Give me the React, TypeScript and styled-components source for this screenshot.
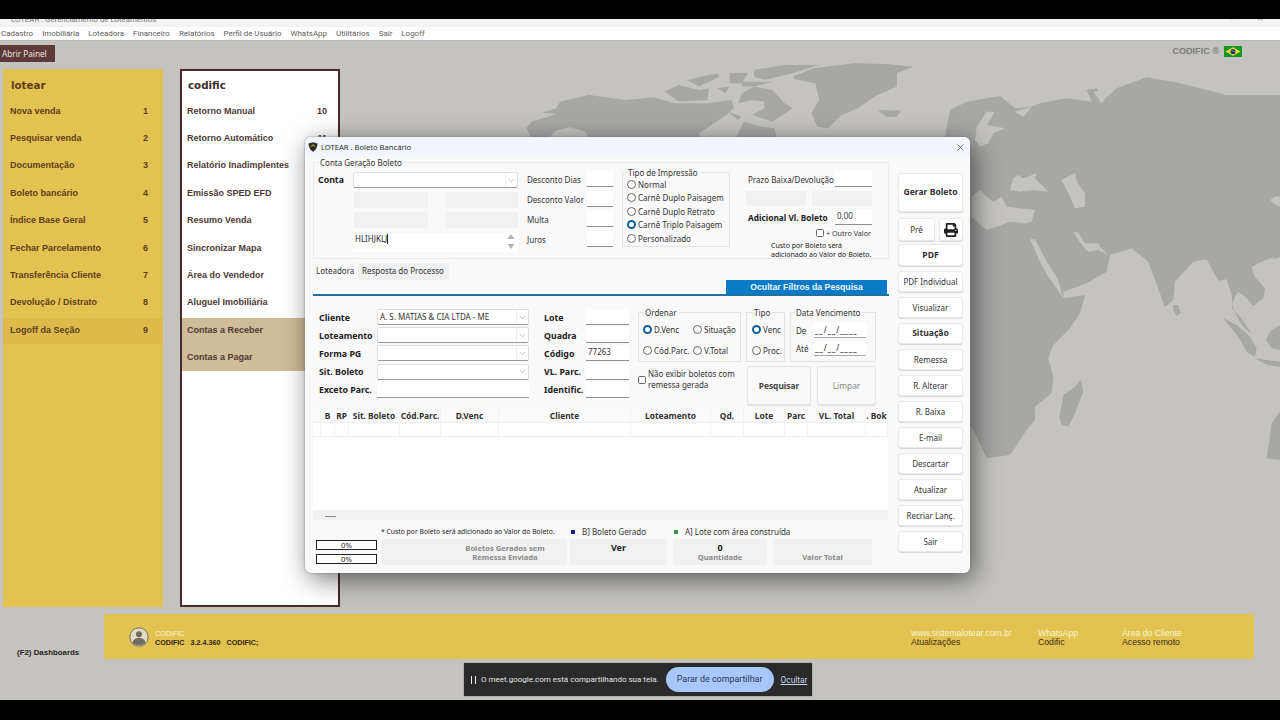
import React from "react";
import styled, { createGlobalStyle } from "styled-components";
import { FaPrint } from "react-icons/fa";
import { ChevronDown, X } from "lucide-react";

const Global = createGlobalStyle`
  html, body { margin: 0; padding: 0; background: #000; }
  body { font-family: "Noto Sans", "Liberation Sans", sans-serif; overflow: hidden; }
  * { box-sizing: border-box; }
`;

const UI = `"Noto Sans", "Liberation Sans", sans-serif`;
const ARIAL = `"Liberation Sans", Arial, sans-serif`;
const SEGOE = `Roboto, "Noto Sans", sans-serif`;

const Page = styled.div`width: 1280px; height: 720px; display: flex; flex-direction: column; background: #000; overflow: hidden;`;
const BlackBar = styled.div<{ $h: number }>`height: ${(p) => p.$h}px; flex: none; background: #000;`;
const WinStrip = styled.div`height: 8px; flex: none; background: #f3f3f3; overflow: hidden; display: flex; justify-content: space-between; padding: 0 11px; color: #777; font: 7.8px/8px ${SEGOE};`;
const WinTitle = styled.span`margin-top: -3px; white-space: nowrap;`;
const WinCtl = styled.span`margin-top: -4px; margin-right: 5px; display: flex; gap: 24px; color: #999;`;
const Menu = styled.nav`height: 14px; flex: none; background: #fff; border-bottom: 1px solid #bbb; display: flex; gap: 9px; align-items: center; color: #5c5c5c; font: 7.95px/13px ${SEGOE}; padding-left: 1px;`;

const Desk = styled.main`position: relative; flex: 1; min-height: 0; background: #c4c3bf; display: flex; flex-direction: column;`;
const MapArt = styled.svg`position: absolute; inset: 0; width: 1280px; height: 659px;`;
const TopRow = styled.div`position: relative; height: 28px; flex: none; padding: 4px 38px 0 0; display: flex; justify-content: space-between; align-items: flex-start;`;
const OpenPanel = styled.button`width: 55px; height: 17px; border: 0; padding: 0 0 0 2px; background: #5c3a38; color: #efe6e0; font: 8.2px/17px ${UI}; text-align: left;`;
const Brand = styled.div`display: flex; align-items: center; gap: 5px; margin-top: 1px; color: #7b7b78; font: bold 9.1px/11px ${ARIAL};`;

const Panels = styled.div`position: relative; display: flex; gap: 17px; padding-left: 3px; height: 538px; flex: none;`;
const Panel = styled.section<{ $light?: boolean }>`
  width: 160px; height: 538px; padding-top: ${(p) => (p.$light ? 6 : 8)}px;
  background: ${(p) => (p.$light ? "#fff" : "#e2c250")};
  border: ${(p) => (p.$light ? "2px solid #4a2a2c" : "0")};
  color: ${(p) => (p.$light ? "#4d3a36" : "#5e3d1c")};
`;
const PanelTitle = styled.h2<{ $light?: boolean }>`margin: 0 0 4px; padding-left: ${(p) => (p.$light ? 6 : 8)}px; height: 16px; font: bold 10.3px/16px "DejaVu Sans", sans-serif; color: ${(p) => (p.$light ? "#3c2f2c" : "#5e3d1c")};`;
const PanelRow = styled.div<{ $tone?: string; $light?: boolean; $joined?: boolean }>`
  height: 27.4px; display: flex; justify-content: space-between; align-items: center;
  padding: 0 ${(p) => (p.$light ? 11 : 15)}px 0 ${(p) => (p.$light ? 5 : 7)}px;
  background: ${(p) => (p.$tone ? (p.$joined ? p.$tone : `linear-gradient(transparent 2px, ${p.$tone} 2px)`) : "transparent")};
  font: bold 9px/14px ${ARIAL}; white-space: nowrap;
`;

const Bottom = styled.div`position: relative; display: flex; align-items: flex-start; padding-top: 7px;`;
const F2 = styled.div`width: 104px; padding: 33px 0 0 17px; font: bold 7.9px/11px ${ARIAL}; color: #222; white-space: nowrap;`;
const InfoBar = styled.footer`width: 1150px; height: 45px; background: #e2c250; display: flex; align-items: center; padding-left: 25px;`;
const Who = styled.div`display: flex; align-items: center; gap: 6px; flex: 1;`;
const InfoCol = styled.div<{ $w: number; $fs?: number }>`width: ${(p) => p.$w}px; margin-top: 3px; font: ${(p) => p.$fs || 8.7}px/9.5px ${ARIAL}; color: #3d2c10;`;
const InfoHead = styled.div`color: #fbf3d0; white-space: nowrap;`;
const InfoSub = styled.div`white-space: nowrap;`;
const WhoSub = styled(InfoSub)`font-weight: bold; word-spacing: 4px; color: #32250c;`;

const MeetBar = styled.div`position: absolute; left: 464px; top: 622px; width: 348px; height: 33px; background: #2a2a2a; color: #e4e4e4; display: flex; align-items: center; padding-left: 7px; font: 8px/12px ${SEGOE}; white-space: nowrap; box-shadow: 0 0 1px #555;`;
const Pause = styled.span`width: 5px; height: 8px; flex: none; margin-right: 5px; border-left: 1.5px solid #eee; border-right: 1.5px solid #eee;`;
const MeetStop = styled.button`margin-left: 7px; width: 108px; height: 25px; flex: none; border: 0; padding: 0; border-radius: 13px; background: #a8c7fa; color: #1e3a63; font: 400 8.9px/25px ${SEGOE};`;
const MeetHide = styled.a`margin-left: 7px; color: #c9d6e8; text-decoration: underline; font-size: 8.3px;`;

const Dialog = styled.div`position: absolute; left: 305px; top: 96px; width: 665px; height: 436px; background: #f9f9f9; border-radius: 6px; box-shadow: 0 0 2px #777, 4px 6px 26px rgba(0,0,0,.55); color: #333; font: 8px/11px ${UI}; overflow: hidden;`;
const TitleBar = styled.header`height: 20px; display: flex; align-items: center; gap: 3px; padding: 0 4px 0 3px; background: #f2f5fb; font-size: 7.6px; color: #2c2c2c; justify-content: flex-start;`;
const TitleText = styled.span`flex: 1;`;
const Body = styled.div`display: flex; gap: 9px; padding: 5px 0 0 8px;`;
const Content = styled.div`width: 576px; display: flex; flex-direction: column;`;
const Side = styled.aside`width: 65px; margin-top: 11px; display: flex; flex-direction: column; gap: 5px;`;
const SideBtn = styled.button<{ $h?: number; $bold?: boolean; $grow?: boolean; $narrow?: boolean }>`
  height: ${(p) => p.$h || 21}px; ${(p) => p.$grow && "flex: 1;"} ${(p) => p.$narrow && "width: 24px; flex: none;"} min-width: 0; padding: 0; background: #fff; border: 1px solid #e9e9e9; border-radius: 3px;
  box-shadow: 0 1px 1px rgba(0,0,0,.14); color: #333; white-space: nowrap;
  font: ${(p) => (p.$bold ? "bold 8.6px" : "normal 8px")}/11px ${UI};
  display: flex; align-items: center; justify-content: center;
`;
const SideSplit = styled.div`display: flex; gap: 4px; margin-top: 1px; margin-bottom: -2px;`;

const TopGroup = styled.div`position: relative; height: 97px; padding: 9px 0 0 4px; border: 1px solid #ececec; display: flex;`;
const Legend = styled.span<{ $x: number }>`position: absolute; left: ${(p) => p.$x}px; top: -6px; padding: 0 2px 0 1px; background: #f9f9f9; white-space: nowrap; color: #333;`;
const AccCol = styled.div`width: 200px; display: flex; flex-direction: column;`;
const AccRow = styled.div`display: flex; align-items: center; height: 16px;`;
const StrongLabel = styled.label<{ $w?: number; $fs?: number }>`font-weight: 700; font-size: ${(p) => p.$fs || 8.8}px; color: #222; white-space: nowrap; ${(p) => p.$w && `width: ${p.$w}px; flex: none;`}`;
const Pair = styled.div`display: flex; gap: 17px; padding-left: 36px; margin-top: 4px;`;
const Ghost = styled.div<{ $w: number; $h?: number }>`width: ${(p) => p.$w}px; height: ${(p) => p.$h || 16}px; background: #f1f1f1;`;
const Memo = styled.div`margin: 5px 0 0 35px; height: 19px; background: #fff; padding: 0 3px 0 2px; display: flex; justify-content: space-between; align-items: flex-start; color: #222;`;
const Caret = styled.span`display: inline-block; width: 1px; height: 10px; background: #222; vertical-align: -2px;`;
const Select = styled.div`
  flex: 1; height: 16px; background: #fff; border: 1px solid #ddd; border-bottom-color: #999; border-radius: 2px; padding: 0 14px 0 2px; position: relative; line-height: 14px; color: #333; white-space: nowrap;
`;
const SelectArrow = styled.span<{ $noSep?: boolean }>`position: absolute; right: 0; top: 0; bottom: 0; width: 12px; display: flex; align-items: center; justify-content: center; color: #888; ${(p) => !p.$noSep && "border-left: 1px solid #eee;"}`;
const PlainCol = styled.div`width: 86px; margin: -1px 0 0 9px; display: flex; flex-direction: column; gap: 4px;`;
const LabelRow = styled.div`height: 16px; display: flex; justify-content: space-between; align-items: center; white-space: nowrap;`;
const IndentRow = styled(LabelRow)`padding-left: 2px;`;
const Under = styled.div<{ $w: number; $h?: number }>`width: ${(p) => p.$w}px; height: ${(p) => p.$h || 16}px; flex: none; background: #fff; border-bottom: 1px solid #8e8e8e; padding: 0 2px; line-height: 14px; color: #333;`;
const Box = styled.div<{ $w: number; $h: number; $ml?: number }>`position: relative; width: ${(p) => p.$w}px; height: ${(p) => p.$h}px; flex: none; margin-left: ${(p) => p.$ml || 0}px; border: 1px solid #e3e3e3;`;
const RadioStack = styled.div`display: flex; flex-direction: column; gap: 2.4px; padding: 6px 0 0 4px;`;
const RadioItem = styled.label`display: flex; align-items: center; gap: 2px; height: 11px; white-space: nowrap; color: #333;`;
const RadioDot = styled.span<{ $on?: boolean }>`width: 9px; height: 9px; flex: none; border-radius: 50%; background: #fff; border: ${(p) => (p.$on ? "2.6px solid #0f5f9e" : "1px solid #666")};`;
const RightCol = styled.div`width: 126px; margin: -1px 0 0 16px; display: flex; flex-direction: column;`;
const GhostRow = styled.div`display: flex; gap: 6px; margin: 4px 0 3px;`;
const OtherRow = styled.label`display: flex; align-items: center; justify-content: flex-end; gap: 2px; margin-top: 3px; font-size: 7.2px; height: 10px; padding-right: 1px;`;
const Check = styled.span`width: 8px; height: 8px; flex: none; background: #fff; border: 1px solid #666; border-radius: 1.5px;`;
const Note = styled.div`margin: 3px 0 0 25px; font-size: 7px; line-height: 9px; color: #222; white-space: nowrap;`;

const Tabs = styled.div`display: flex; height: 17px; margin-top: 4px;`;
const Tab = styled.div<{ $on?: boolean }>`width: ${(p) => (p.$on ? 45 : 91)}px; line-height: 16px; padding-left: ${(p) => (p.$on ? 3 : 4)}px; background: ${(p) => (p.$on ? "#f9f9f9" : "#f0f0f0")}; color: #333; white-space: nowrap;`;
const FilterHead = styled.div`height: 16px; border-bottom: 2px solid #1d719f; display: flex; justify-content: flex-end; padding-right: 2px;`;
const Hide = styled.div`width: 161px; height: 14px; background: #0b7ac7; color: #eef6fb; text-align: center; font: bold 8.7px/15px ${ARIAL};`;

const Filters = styled.div`display: flex; margin-top: 13px; height: 99px;`;
const FormCol = styled.div`width: 216px; padding-left: 6px; display: flex; flex-direction: column; gap: 2.2px;`;
const FormRow = styled.div`height: 16px; display: flex; align-items: center; white-space: nowrap; label { padding-top: 2px; }`;
const LotCol = styled.div`width: 85px; margin-left: 15px; display: flex; flex-direction: column; gap: 2.2px;`;
const Wide = styled.div`flex: 1; height: 16px; background: #fff; border-bottom: 1px solid #999;`;
const FilterRight = styled.div`margin: 3px 0 0 9px; display: flex; flex-direction: column; gap: 4px;`;
const FieldRow = styled.div`display: flex; gap: 5px;`;
const RadioGrid = styled.div`display: grid; grid-template-columns: 50px 48px; row-gap: 10px; padding: 11px 0 0 4px;`;
const RadioCol = styled.div`display: flex; flex-direction: column; gap: 10px; padding: 11px 0 0 5px;`;
const DateRows = styled.div`display: flex; flex-direction: column; gap: 3px; padding: 10px 0 0 5px;`;
const DateRow = styled.div`height: 15px; display: flex; align-items: center; gap: 7px;`;
const DateLabel = styled.span`width: 11px;`;
const DateValue = styled.div`width: 52px; height: 15px; background: #fff; border-bottom: 1px solid #aaa; padding-left: 1px; line-height: 14px; letter-spacing: .8px; color: #222;`;
const ActionRow = styled.div`display: flex; align-items: flex-start;`;
const HideCheck = styled.label`width: 109px; display: flex; align-items: center; gap: 2px; margin-top: 3px; line-height: 10.5px; color: #333; font-size: 8px;`;
const BigBtn = styled.button<{ $w: number; $dim?: boolean; $ml?: number }>`width: ${(p) => p.$w}px; margin-left: ${(p) => p.$ml || 0}px; height: 39px; padding: 0; background: #f9f9f9; border: 1px solid #e5e5e5; border-radius: 3px; box-shadow: 0 1px 1px rgba(0,0,0,.1); font: ${(p) => (p.$dim ? "normal" : "bold")} 8.4px/11px ${UI}; color: ${(p) => (p.$dim ? "#888" : "#444")};`;

const COLS = "8px 14px 14px 51px 41px 58px 132px 80px 33px 41px 23px 58px 22px";
const Grid = styled.div`width: 575px; display: flex; flex-direction: column; background: #fff;`;
const GridHead = styled.div`display: grid; grid-template-columns: ${COLS}; height: 14px; background: #fafafa; overflow: hidden;`;
const HeadCell = styled.div`font: 700 8.4px/16px ${UI}; color: #333; text-align: center; white-space: nowrap; border-right: 1px solid #f1f1f1;`;
const GridRow = styled.div`display: grid; grid-template-columns: ${COLS}; height: 15px; border-top: 1px solid #eee; border-bottom: 1px solid #eee;`;
const RowCell = styled.div`border-right: 1px solid #f3f3f3;`;
const GridEmpty = styled.div`height: 73px;`;
const GridScroll = styled.div`height: 10px; background: #f1f1f1; padding: 6px 0 0 12px;`;
const Dash = styled.div`width: 11px; height: 1px; background: #888;`;

const Footer = styled.div`display: flex; flex-direction: column; padding-top: 5px;`;
const LegendRow = styled.div`height: 13px; display: flex; align-items: center; padding-left: 68px; white-space: nowrap;`;
const Fine = styled.span`font-size: 6.8px; width: 190px; color: #222;`;
const Key = styled.span<{ $c: string; $w: number }>`display: flex; align-items: center; gap: 7px; width: ${(p) => p.$w}px; font-size: 8px; &::before { content: ""; width: 4px; height: 4px; background: ${(p) => p.$c}; }`;
const Tiles = styled.div`display: flex; margin-top: 1px; padding-left: 3px;`;
const Bars = styled.div`width: 61px; display: flex; flex-direction: column; gap: 4px; margin-top: 1px;`;
const Progress = styled.div`height: 10px; background: #fff; border: 1px solid #222; text-align: center; font-size: 7.8px; line-height: 8px; color: #222;`;
const Tile = styled.div<{ $w: number; $ml: number; $pad?: number }>`width: ${(p) => p.$w}px; margin-left: ${(p) => p.$ml}px; height: 26px; padding-left: ${(p) => p.$pad || 0}px; background: #f1f1f1; display: flex; flex-direction: column; align-items: center; justify-content: center; color: #8a8a8a; font: bold 7.6px/9.5px ${UI}; text-align: center; white-space: nowrap;`;
const TileText = styled.div`padding-top: 2px;`;
const TileStrong = styled.div`font: bold 9px/11px ${UI}; color: #222;`;

const menu = ["Cadastro", "Imobiliária", "Loteadora", "Financeiro", "Relatórios", "Perfil de Usuário", "WhatsApp", "Utilitários", "Sair", "Logoff"];
const left = ["Nova venda", "Pesquisar venda", "Documentação", "Boleto bancário", "Índice Base Geral", "Fechar Parcelamento", "Transferência Cliente", "Devolução / Distrato", "Logoff da Seção"];
const right = ["Retorno Manual", "Retorno Automático", "Relatório Inadimplentes", "Emissão SPED EFD", "Resumo Venda", "Sincronizar Mapa", "Área do Vendedor", "Aluguel Imobiliária", "Contas a Receber", "Contas a Pagar"];
const printTypes = [["Normal"], ["Carnê Duplo Paisagem"], ["Carnê Duplo Retrato"], ["Carnê Triplo Paisagem", true], ["Personalizado"]] as const;
const heads = ["", "B", "RP", "Sit. Boleto", "Cód.Parc.", "D.Venc", "Cliente", "Loteamento", "Qd.", "Lote", "Parc", "VL. Total", ". Bok"];
const sideButtons = ["Visualizar", "Situação", "Remessa", "R. Alterar", "R. Baixa", "E-mail", "Descartar", "Atualizar", "Recriar Lanç.", "Sair"];

const poly = (pts: string, fill: string) => <polygon points={pts} fill={fill} />;
const LAND = "#a7a7a6";
const SEA = "#c4c3bf";

function WorldMap() {
  return (
    <MapArt viewBox="0 41 1280 659" aria-hidden="true">
      <g transform="translate(340 40) scale(.408 .333)">
        {poly("457,265 470,245 530,222 495,218 530,205 540,185 610,165 700,180 770,172 820,190 900,190 960,180 965,205 950,222 880,280 880,295 610,295 600,275 565,262 530,272 510,295 470,295", LAND)}
        {poly("970,295 990,245 1030,260 1065,265 1070,295", LAND)}
        {poly("975,190 985,160 1015,140 1060,150 1090,190 1110,205 1060,245 1010,225 1040,205 1040,185 1010,180", LAND)}
        {poly("795,155 830,135 880,150 905,145 900,180 830,185", LAND)}
        {poly("850,120 885,110 925,100 930,110 905,125 880,140", LAND)}
        {poly("925,145 955,140 945,160", LAND)}
        {poly("1015,90 1090,75 1175,75 1110,100 1040,120 1015,110", LAND)}
        {poly("955,100 1000,98 985,130 955,130", LAND)}
        {poly("985,125 1060,125 1015,140 985,140", LAND)}
        {poly("950,215 985,230 975,240", LAND)}
        {poly("1110,110 1160,85 1260,70 1340,72 1405,80 1365,100 1365,140 1310,170 1270,205 1230,225 1195,265 1170,260 1155,220 1175,180 1165,130 1115,118", LAND)}
        {poly("1318,210 1375,212 1365,230 1340,232", LAND)}
      </g>
      <g transform="translate(960 0) scale(.3333)">
        {poly("-45,1200 -45,410 -30,330 20,305 120,288 165,325 215,320 240,310 320,295 395,305 380,270 410,265 430,300 470,265 560,232 640,245 720,265 800,285 960,285 960,772 905,785 875,805 885,830 915,865 910,895 880,918 860,895 835,875 825,890 815,925 835,945 855,970 875,1002 845,975 820,930 815,885 800,838 775,842 740,778 700,785 645,845 640,900 615,922 565,785 515,745 450,765 440,815 380,850 310,875 310,895 375,885 360,940 330,985 280,1035 265,1075 280,1130 275,1180 225,1220 225,1260 200,1290 150,1365 80,1375 40,1290", LAND)}
        {poly("210,718 225,718 255,775 295,840 305,880 310,895 300,880 265,830 240,785", SEA)}
        {poly("340,695 355,698 375,730 415,730 420,740 445,765 415,750 385,755 365,735", SEA)}
        {poly("35,590 60,570 80,590 100,605 125,590 140,620 180,625 225,630 215,665 195,670 150,665 110,680 80,690 55,670 35,650", SEA)}
        {poly("150,570 160,535 175,525 190,535 230,520 225,535 265,575 220,570 180,575", SEA)}
        {poly("305,540 345,518 350,545 375,580 375,620 345,625 330,590", SEA)}
        {poly("50,380 80,335 105,335 80,375 135,385 100,400 85,430 60,440 45,420", SEA)}
        {poly("165,335 215,320 190,350", SEA)}
        {poly("400,275 425,310 435,300 415,272", SEA)}
        {poly("930,600 945,590 960,590 960,620 945,612", SEA)}
        {poly("875,800 905,785 945,770 915,800 905,815 890,825", SEA)}
        {poly("362,1140 370,1175 345,1240 325,1280 305,1275 298,1250 310,1185 345,1160", LAND)}
        {poly("640,915 655,915 662,940 650,948 640,930", LAND)}
        {poly("790,955 830,975 870,1010 890,1045 885,1070 860,1055 835,1010", LAND)}
        {poly("885,1075 920,1080 960,1085 960,1100 920,1095", LAND)}
        {poly("960,975 930,995 918,1020 935,1045 960,1050", LAND)}
        {poly("960,1235 935,1270 930,1310 920,1375 960,1380", LAND)}
      </g>
    </MapArt>
  );
}

const Shield = () => (
  <svg width="10" height="10" viewBox="0 0 10 10" aria-hidden="true">
    <path d="M0.5 1.5 L5 0.3 L9.5 1.5 C9.5 5 8 8 5 9.7 C2 8 .5 5 .5 1.5Z" fill="#2c2c20" />
    <path d="M2 5 L5 2.2 L8 5 L5 3.8Z" fill="#d8c23e" />
  </svg>
);

const Flag = () => (
  <svg width="18" height="11" viewBox="0 0 18 11" aria-hidden="true">
    <rect width="18" height="11" fill="#17951f" />
    <path d="M9 1.2 L16.4 5.5 L9 9.8 L1.6 5.5Z" fill="#f4e23a" />
    <circle cx="9" cy="5.5" r="2.6" fill="#1a2a70" />
    <path d="M6.6 5 C8 4.6 10 5 11.5 6" stroke="#eee" strokeWidth=".5" fill="none" />
  </svg>
);

const Person = () => (
  <svg width="20" height="20" viewBox="0 0 20 20" aria-hidden="true">
    <circle cx="10" cy="10" r="9.2" fill="#e4dcc0" stroke="#6f6c63" strokeWidth="1" />
    <circle cx="10" cy="7.3" r="3" fill="#6f6c63" />
    <path d="M3.5 16 C4 12 7 11 10 11 C13 11 16 12 16.5 16 C14.5 18.8 5.5 18.8 3.5 16Z" fill="#6f6c63" />
  </svg>
);

const SpinArrows = () => (
  <svg width="8" height="17" viewBox="0 0 8 17" aria-hidden="true">
    <path d="M4 1 L7.5 6 H.5Z M4 16 L.5 11 H7.5Z" fill="#b5b5b5" />
  </svg>
);

const Arrow = ({ noSep }: { noSep?: boolean }) => (
  <SelectArrow $noSep={noSep}><ChevronDown size={9} strokeWidth={1.4} /></SelectArrow>
);

export default function App() {
  return (
    <Page>
      <Global />
      <BlackBar $h={19} />
      <WinStrip>
        <WinTitle>LOTEAR . Gerenciamento de Loteamentos</WinTitle>
        <WinCtl><span>▫</span><span>✕</span></WinCtl>
      </WinStrip>
      <Menu>{menu.map((m) => <span key={m}>{m}</span>)}</Menu>
      <Desk>
        <WorldMap />
        <TopRow>
          <OpenPanel>Abrir Painel</OpenPanel>
          <Brand>CODIFIC ® <Flag /></Brand>
        </TopRow>
        <Panels>
          <Panel>
            <PanelTitle>lotear</PanelTitle>
            {left.map((t, i) => (
              <PanelRow key={t} $tone={i === 8 ? "#dcbb4c" : undefined}><span>{t}</span><span>{i + 1}</span></PanelRow>
            ))}
          </Panel>
          <Panel $light>
            <PanelTitle $light>codific</PanelTitle>
            {right.map((t, i) => (
              <PanelRow key={t} $light $joined={i === 9} $tone={i >= 8 ? "#cfbc98" : undefined}><span>{t}</span><span>{i < 2 ? 10 + i : ""}</span></PanelRow>
            ))}
          </Panel>
        </Panels>
        <Bottom>
          <F2>(F2) Dashboards</F2>
          <InfoBar>
            <Who>
              <Person />
              <InfoCol $w={200} $fs={7.2}>
                <InfoHead>CODIFIC</InfoHead>
                <WhoSub>CODIFIC 3.2.4.360 CODIFIC;</WhoSub>
              </InfoCol>
            </Who>
            <InfoCol $w={127}><InfoHead>www.sistemalotear.com.br</InfoHead><InfoSub>Atualizações</InfoSub></InfoCol>
            <InfoCol $w={84}><InfoHead>WhatsApp</InfoHead><InfoSub>Codific</InfoSub></InfoCol>
            <InfoCol $w={132}><InfoHead>Área do Cliente</InfoHead><InfoSub>Acesso remoto</InfoSub></InfoCol>
          </InfoBar>
        </Bottom>
        <MeetBar>
          <Pause />
          O meet.google.com está compartilhando sua tela.
          <MeetStop>Parar de compartilhar</MeetStop>
          <MeetHide>Ocultar</MeetHide>
        </MeetBar>

        <Dialog>
          <TitleBar>
            <Shield />
            <TitleText>LOTEAR . Boleto Bancário</TitleText>
            <X size={11} strokeWidth={1.4} />
          </TitleBar>
          <Body>
            <Content>
              <TopGroup>
                <Legend $x={5}>Conta Geração Boleto</Legend>
                <AccCol>
                  <AccRow>
                    <StrongLabel $w={35}>Conta</StrongLabel>
                    <Select><Arrow /></Select>
                  </AccRow>
                  <Pair><Ghost $w={74} /><Ghost $w={73} /></Pair>
                  <Pair><Ghost $w={74} /><Ghost $w={73} /></Pair>
                  <Memo>
                    <span>HLIHJKLJ<Caret /></span>
                    <SpinArrows />
                  </Memo>
                </AccCol>
                <PlainCol>
                  {["Desconto Dias", "Desconto Valor", "Multa", "Juros"].map((l) => (
                    <LabelRow key={l}><span>{l}</span><Under $w={26} /></LabelRow>
                  ))}
                </PlainCol>
                <Box $w={108} $h={75} $ml={9}>
                  <Legend $x={4}>Tipo de Impressão</Legend>
                  <RadioStack>
                    {printTypes.map(([l, on]) => (
                      <RadioItem key={l}><RadioDot $on={!!on} />{l}</RadioItem>
                    ))}
                  </RadioStack>
                </Box>
                <RightCol>
                  <IndentRow><span>Prazo Baixa/Devolução</span><Under $w={37} /></IndentRow>
                  <GhostRow><Ghost $w={60} $h={15} /><Ghost $w={60} $h={15} /></GhostRow>
                  <IndentRow><StrongLabel $fs={8.3}>Adicional Vl. Boleto</StrongLabel><Under $w={37}>0,00</Under></IndentRow>
                  <OtherRow><Check />+ Outro Valor</OtherRow>
                  <Note>Custo por Boleto será<br />adicionado ao Valor do Boleto.</Note>
                </RightCol>
              </TopGroup>
              <Tabs>
                <Tab $on>Loteadora</Tab>
                <Tab>Resposta do Processo</Tab>
              </Tabs>
              <FilterHead><Hide>Ocultar Filtros da Pesquisa</Hide></FilterHead>
              <Filters>
                <FormCol>
                  <FormRow><StrongLabel $w={58}>Cliente</StrongLabel><Select>A. S. MATIAS &amp; CIA LTDA - ME<Arrow /></Select></FormRow>
                  <FormRow><StrongLabel $w={58}>Loteamento</StrongLabel><Select><Arrow /></Select></FormRow>
                  <FormRow><StrongLabel $w={58}>Forma PG</StrongLabel><Select><Arrow /></Select></FormRow>
                  <FormRow><StrongLabel $w={58}>Sit. Boleto</StrongLabel><Select><Arrow noSep /></Select></FormRow>
                  <FormRow><StrongLabel $w={58}>Exceto Parc.</StrongLabel><Wide /></FormRow>
                </FormCol>
                <LotCol>
                  {[["Lote", ""], ["Quadra", ""], ["Código", "77263"], ["VL. Parc.", ""], ["Identific.", ""]].map(([l, v]) => (
                    <FormRow key={l}><StrongLabel $w={42}>{l}</StrongLabel><Under $w={43}>{v}</Under></FormRow>
                  ))}
                </LotCol>
                <FilterRight>
                  <FieldRow>
                    <Box $w={103} $h={50}>
                      <Legend $x={5}>Ordenar</Legend>
                      <RadioGrid>
                        <RadioItem><RadioDot $on />D.Venc</RadioItem>
                        <RadioItem><RadioDot />Situação</RadioItem>
                        <RadioItem><RadioDot />Cód.Parc.</RadioItem>
                        <RadioItem><RadioDot />V.Total</RadioItem>
                      </RadioGrid>
                    </Box>
                    <Box $w={39} $h={50}>
                      <Legend $x={6}>Tipo</Legend>
                      <RadioCol>
                        <RadioItem><RadioDot $on />Venc</RadioItem>
                        <RadioItem><RadioDot />Proc.</RadioItem>
                      </RadioCol>
                    </Box>
                    <Box $w={86} $h={50}>
                      <Legend $x={4}>Data Vencimento</Legend>
                      <DateRows>
                        <DateRow><DateLabel>De</DateLabel><DateValue>__/__/____</DateValue></DateRow>
                        <DateRow><DateLabel>Até</DateLabel><DateValue>__/__/____</DateValue></DateRow>
                      </DateRows>
                    </Box>
                  </FieldRow>
                  <ActionRow>
                    <HideCheck><Check /><span>Não exibir boletos com<br />remessa gerada</span></HideCheck>
                    <BigBtn $w={64}>Pesquisar</BigBtn>
                    <BigBtn $w={59} $ml={6} $dim>Limpar</BigBtn>
                  </ActionRow>
                </FilterRight>
              </Filters>
              <Grid>
                <GridHead>{heads.map((h, i) => <HeadCell key={i}>{h}</HeadCell>)}</GridHead>
                <GridRow>{heads.map((_, i) => <RowCell key={i} />)}</GridRow>
                <GridEmpty />
                <GridScroll><Dash /></GridScroll>
              </Grid>
              <Footer>
                <LegendRow>
                  <Fine>* Custo por Boleto será adicionado ao Valor do Boleto.</Fine>
                  <Key $c="#1b1b8c" $w={103}>B] Boleto Gerado</Key>
                  <Key $c="#2f9a3a" $w={140}>A] Lote com área construída</Key>
                </LegendRow>
                <Tiles>
                  <Bars><Progress>0%</Progress><Progress>0%</Progress></Bars>
                  <Tile $w={186} $ml={4} $pad={62}><TileText>Boletos Gerados sem<br />Remessa Enviada</TileText></Tile>
                  <Tile $w={97} $ml={3}><TileStrong>Ver</TileStrong><div>&nbsp;</div></Tile>
                  <Tile $w={94} $ml={6}><TileStrong>0</TileStrong><div>Quantidade</div></Tile>
                  <Tile $w={99} $ml={6}><TileStrong>&nbsp;</TileStrong><div>Valor Total</div></Tile>
                </Tiles>
              </Footer>
            </Content>
            <Side>
              <SideBtn $h={39} $bold>Gerar Boleto</SideBtn>
              <SideSplit>
                <SideBtn $h={23} $grow>Pré</SideBtn>
                <SideBtn $h={23} $narrow><FaPrint size={14} color="#222" /></SideBtn>
              </SideSplit>
              <SideBtn $h={22} $bold>PDF</SideBtn>
              <SideBtn>PDF Individual</SideBtn>
              {sideButtons.map((b) => <SideBtn key={b} $bold={b === "Situação"}>{b}</SideBtn>)}
            </Side>
          </Body>
        </Dialog>
      </Desk>
      <BlackBar $h={20} />
    </Page>
  );
}
